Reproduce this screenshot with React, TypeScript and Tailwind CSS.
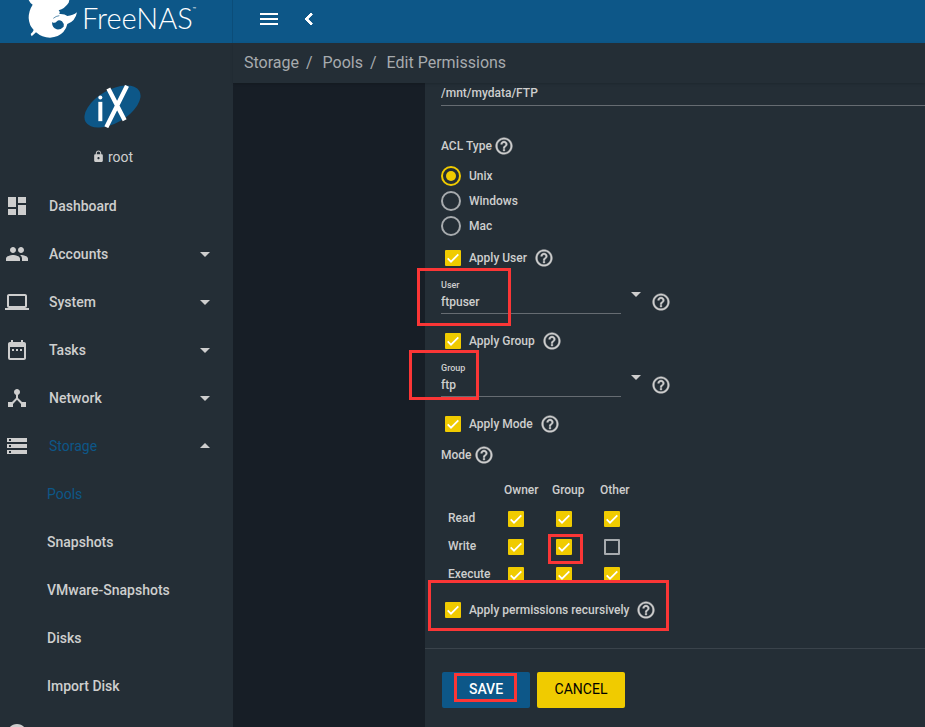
import React, { ReactNode, useId, useState } from 'react';
import {
  MdArrowDropDown,
  MdArrowDropUp,
  MdChevronLeft,
  MdDashboard,
  MdDateRange,
  MdDeviceHub,
  MdGroupWork,
  MdHelpOutline,
  MdLaptop,
  MdLock,
  MdMenu,
  MdPeople,
  MdStorage,
} from 'react-icons/md';
import type { IconType } from 'react-icons';

interface NavEntry {
  label: string;
  icon: IconType;
  children?: string[];
}

const NAV: NavEntry[] = [
  { label: 'Dashboard', icon: MdDashboard },
  { label: 'Accounts', icon: MdPeople, children: [] },
  { label: 'System', icon: MdLaptop, children: [] },
  { label: 'Tasks', icon: MdDateRange, children: [] },
  { label: 'Network', icon: MdDeviceHub, children: [] },
  {
    label: 'Storage',
    icon: MdStorage,
    children: ['Pools', 'Snapshots', 'VMware-Snapshots', 'Disks', 'Import Disk'],
  },
];

const SharkLogo = () => (
  <svg width="50" height="39" viewBox="12 0 150 117" aria-hidden="true">
    <path
      fill="#fff"
      d="M14 0 Q18 9 26 14 Q14 32 14 54 Q15 76 29 90 Q26 98 20 102 L23 109 L36 97 Q54 113 78 113 Q104 111 118 96 Q128 84 130 72 Q154 64 159 37 Q147 47 130 48 Q122 41 106 42 Q110 36 104 31 Q122 26 134 8 L136 0 Z"
    />
    <path fill="#0d5788" d="M84 66 Q91 72 99 64 Q104 58 114 64 Q122 72 119 80 Q110 90 98 88 Q84 83 84 66 Z" />
    <path d="M88 55 Q96 48 106 47" fill="none" stroke="#0d5788" strokeWidth="2" />
  </svg>
);

const IxLogo = () => (
  <svg width="57" height="43" viewBox="254 17 171 128" aria-hidden="true">
    <ellipse cx="339.500" cy="81" rx="93" ry="49" transform="rotate(-30 339.500 81)" fill="#0d5788" />
    <path d="M327 27 L376 122 M383 19 L321 143" stroke="#fff" strokeWidth="13" />
    <path d="M303 67 V125" stroke="#fff" strokeWidth="12" />
    <circle cx="303" cy="54" r="6" fill="#fff" />
  </svg>
);

// Red marker drawn around whatever relative parent it sits in
const Marker = ({ className }: { className: string }) => (
  <span className={`pointer-events-none absolute border-3 border-[#fb3636] ${className}`} />
);

const Help = ({ className = '' }: { className?: string }) => (
  <button type="button" aria-label="Help" className={`shrink-0 ${className}`}>
    <MdHelpOutline size={20} className="[&>path:last-child]:stroke-[0.5]" />
  </button>
);

interface CheckProps {
  defaultChecked?: boolean;
  id?: string;
  label?: string;
}

const Check: React.FC<CheckProps> = ({ defaultChecked = true, id, label }) => (
  <span className="relative block size-4">
    <input
      type="checkbox"
      id={id}
      aria-label={label}
      defaultChecked={defaultChecked}
      className="peer block size-4 appearance-none rounded-[1px] border-2 border-[#a7abae] checked:border-[#f0cb00] checked:bg-[#f0cb00]"
    />
    <svg
      viewBox="0 0 24 24"
      className="pointer-events-none absolute inset-0 hidden size-4 peer-checked:block"
      fill="none"
      stroke="#fff"
      strokeWidth="2.6"
    >
      <path d="M4 12.500 L9 17.500 L20 6.500" />
    </svg>
  </span>
);

const CheckRow = ({ label, children }: { label: string; children?: ReactNode }) => {
  const id = useId();
  return (
    <div className="relative flex h-6 items-center pl-1">
      <Check id={id} />
      <label htmlFor={id} className="pl-2">
        {label}
      </label>
      <Help className="ml-[7px]" />
      {children}
    </div>
  );
};

const ComboField = ({ label, value, children }: { label: string; value: string; children?: ReactNode }) => {
  const id = useId();
  return (
    <div className="relative mt-2 mb-[15px] flex items-start">
      <div className="w-[180px]">
        <label htmlFor={id} className="block h-3.5 text-[9px] leading-3.5">
          {label}
        </label>
        <input
          id={id}
          defaultValue={value}
          className="block h-[22px] w-full border-b border-[#666c72] pb-0.5 outline-none"
        />
      </div>
      <button type="button" aria-label={`Choose ${label}`} className="mt-1 ml-[3px]">
        <MdArrowDropDown size={24} />
      </button>
      <Help className="mt-3.5 ml-[3px]" />
      {children}
    </div>
  );
};

const Sidebar = () => (
  <aside className="flex w-[233px] shrink-0 flex-col overflow-hidden bg-[#242e36]">
    <div className="flex h-[139px] shrink-0 flex-col items-center pt-[42px] pr-2">
      <IxLogo />
      <div className="mt-[19px] flex items-center gap-[3px] text-sm leading-5">
        <MdLock size={13} className="mb-0.5" />
        <span>root</span>
      </div>
    </div>
    <nav className="text-sm font-medium">
      {NAV.map(({ label, icon: Icon, children }) => {
        const open = !!children?.length;
        return (
          <div key={label}>
            <a href="#" className="flex h-12 items-center pr-4 pl-[5px]">
              <Icon size={24} className="shrink-0" />
              <span className={`ml-5 flex-1 whitespace-nowrap ${open ? 'font-normal text-[#0d5788]' : ''}`}>
                {label}
              </span>
              {children && (open ? <MdArrowDropUp size={24} /> : <MdArrowDropDown size={24} />)}
            </a>
            {children?.map((child, i) => (
              <a
                key={child}
                href="#"
                className={`flex h-12 items-center pl-[47px] ${i === 0 ? 'font-normal text-[#0d5788]' : ''}`}
              >
                {child}
              </a>
            ))}
          </div>
        );
      })}
      <a href="#" aria-label="Directory Services" className="flex h-12 items-center pl-[5px]">
        <MdGroupWork size={24} />
      </a>
    </nav>
  </aside>
);

const ACL_TYPES = ['Unix', 'Windows', 'Mac'];

const AclType = () => {
  const [selected, setSelected] = useState('Unix');
  return (
    <fieldset className="mt-7">
      <legend className="flex h-6 items-center gap-0.5">
        ACL Type <Help />
      </legend>
      <div className="mt-[5px]">
        {ACL_TYPES.map((type) => (
          <label key={type} className="flex h-[25px] items-center gap-2">
            <span className="relative block size-5">
              <input
                type="radio"
                name="acl"
                checked={selected === type}
                onChange={() => setSelected(type)}
                className="peer block size-5 appearance-none rounded-full border-2 border-[#a7abae] checked:border-[#f0cb00]"
              />
              <span className="pointer-events-none absolute inset-[5px] hidden rounded-full bg-[#f0cb00] peer-checked:block" />
            </span>
            {type}
          </label>
        ))}
      </div>
    </fieldset>
  );
};

const COLUMNS = ['Owner', 'Group', 'Other'];
const MODES = ['Read', 'Write', 'Execute'];

const ModeTable = () => (
  <div className="mt-2.5 h-[103px] overflow-hidden">
    <table className="ml-[7px] text-left leading-3">
      <thead>
        <tr className="h-7">
          <td className="w-14 p-0" />
          {COLUMNS.map((col) => (
            <th key={col} scope="col" className="w-12 p-0 pb-0.5 font-medium">
              {col}
            </th>
          ))}
        </tr>
      </thead>
      <tbody>
        {MODES.map((mode) => (
          <tr key={mode} className="h-7">
            <th scope="row" className="p-0 pb-0.5 font-medium">
              {mode}
            </th>
            {COLUMNS.map((col) => (
              <td key={col} className="p-0 pl-1">
                <div className="relative w-4">
                  <Check label={`${mode} ${col}`} defaultChecked={!(mode === 'Write' && col === 'Other')} />
                  {mode === 'Write' && col === 'Group' && <Marker className="-top-[5px] -left-2 h-[30px] w-[35px]" />}
                </div>
              </td>
            ))}
          </tr>
        ))}
      </tbody>
    </table>
  </div>
);

const PermissionsForm = () => (
  <form
    className="ml-48 flex-1 bg-[#242e36] text-xs font-medium"
    onSubmit={(e) => e.preventDefault()}
  >
    <div className="pl-4">
      <input
        aria-label="Path"
        defaultValue="/mnt/mydata/FTP"
        className="block h-[23px] w-full border-b border-[#666c72] pb-0.5 outline-none"
      />
      <AclType />
      <div className="mt-2">
        <CheckRow label="Apply User" />
        <ComboField label="User" value="ftpuser">
          <Marker className="-top-[10px] -left-6 h-[58px] w-[94px]" />
        </ComboField>
        <CheckRow label="Apply Group" />
        <ComboField label="Group" value="ftp">
          <Marker className="-top-[11px] -left-8 h-[50px] w-[70px]" />
        </ComboField>
        <CheckRow label="Apply Mode" />
      </div>
      <div className="mt-[7px] flex h-6 items-center gap-0.5">
        Mode <Help />
      </div>
      <ModeTable />
      <div className="mt-[18px]">
        <CheckRow label="Apply permissions recursively">
          <Marker className="-top-[18px] -left-[13px] h-[51px] w-[241px]" />
        </CheckRow>
      </div>
    </div>
    <div className="mt-[26px] flex gap-[7px] border-t border-[#3a434b] pt-[23px] pl-[17px] text-sm">
      <button type="submit" className="relative h-9 w-22 rounded-xs bg-[#0d5788] pb-0.5 text-white">
        SAVE
        <Marker className="top-px left-3 h-[29px] w-[63px]" />
      </button>
      <button type="button" className="h-9 w-22 rounded-xs bg-[#f0cb00] pb-0.5 font-normal text-black">
        CANCEL
      </button>
    </div>
  </form>
);

const App = () => (
  <div className="flex h-screen flex-col overflow-hidden bg-[#171e26] font-['Roboto',sans-serif] text-[#cecece]">
    <header className="flex h-[43px] shrink-0 bg-[#0d5788] text-white">
      <a href="#" className="flex w-[233px] shrink-0 items-start gap-1 border-r border-[#0b4d79] pl-7">
        <SharkLogo />
        <span className="font-['Lato',sans-serif] text-[29px] leading-[35px] font-light">FreeNAS</span>
        <span className="-ml-1 pt-1 text-[6px]">™</span>
      </a>
      <div className="flex h-[38px] items-center gap-4 pl-6">
        <button type="button" aria-label="Toggle menu">
          <MdMenu size={24} />
        </button>
        <button type="button" aria-label="Collapse menu">
          <MdChevronLeft size={24} className="[&>path:last-child]:stroke-1" />
        </button>
      </div>
    </header>
    <div className="flex min-h-0 flex-1">
      <Sidebar />
      <main className="flex min-w-0 flex-1 flex-col">
        <nav
          aria-label="Breadcrumb"
          className="z-10 flex h-10 shrink-0 items-center bg-[#242e36] pl-[11px] text-base text-[#a7abae] shadow"
        >
          <a href="#">Storage</a>
          <span className="pr-2.5 pl-[7px]">/</span>
          <a href="#">Pools</a>
          <span className="pr-2.5 pl-[7px]">/</span>
          <span>Edit Permissions</span>
        </nav>
        <div className="flex min-h-0 flex-1 overflow-hidden">
          <PermissionsForm />
        </div>
      </main>
    </div>
  </div>
);

export default App;
